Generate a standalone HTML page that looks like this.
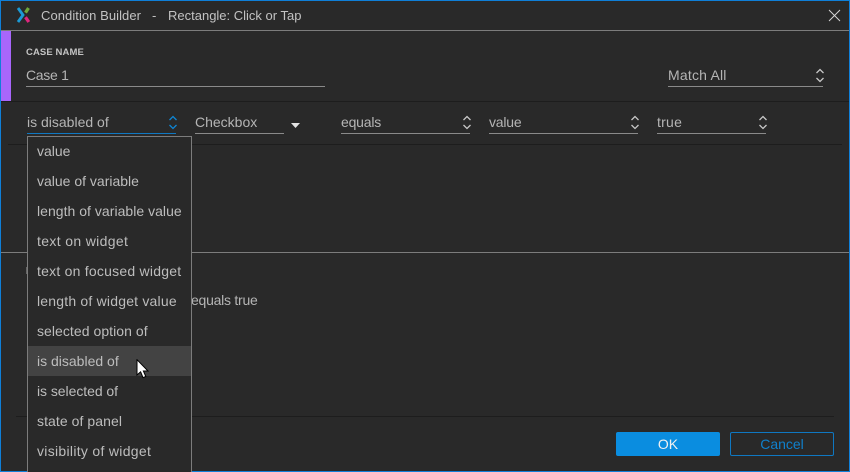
<!DOCTYPE html>
<html>
<head>
<meta charset="utf-8">
<style>
html,body{margin:0;padding:0;background:#292929}
#r{position:relative;width:850px;height:472px;overflow:hidden;background:#292929;font-family:"Liberation Sans",sans-serif;font-size:13px;color:#bdbdbd}
.a{position:absolute}
.t{position:absolute;white-space:nowrap;line-height:18px;height:18px}
.l{position:absolute;height:1px}
.i{position:absolute;left:37px;white-space:nowrap;line-height:18px;font-size:14px;color:#bdbdbd}
svg{position:absolute;display:block}
</style>
</head>
<body>
<div id="r">
<div class="a" style="left:0;top:0;width:850px;height:1px;background:#0f7fd8"></div>
<div class="a" style="left:0;top:471px;width:850px;height:1px;background:#0f7fd8"></div>
<div class="a" style="left:0;top:0;width:1px;height:472px;background:#0f7fd8"></div>
<div class="a" style="left:849px;top:0;width:1px;height:472px;background:#0f7fd8"></div>

<svg style="left:16px;top:7px" width="15" height="16" viewBox="0 0 15 16">
<path d="M2 1 L7 8 L2 15" fill="none" stroke="#1b9ad6" stroke-width="2.8"/>
<path d="M12.5 1 L9.5 5.6" fill="none" stroke="#6fa83c" stroke-width="3.2"/>
<path d="M9.5 10.2 L12.8 15" fill="none" stroke="#e0267f" stroke-width="3.2"/>
</svg>
<div class="t" style="left:41px;top:7px;font-size:13px;letter-spacing:.06px;color:#c2c2c2">Condition Builder</div>
<div class="t" style="left:152px;top:7px;color:#c2c2c2">-</div>
<div class="t" style="left:168px;top:7px;font-size:13px;color:#c2c2c2">Rectangle: Click or Tap</div>
<svg style="left:828px;top:9px" width="13" height="13" viewBox="0 0 13 13"><path d="M1 1 L12 12 M12 1 L1 12" stroke="#d8d8d8" stroke-width="0.9" fill="none"/></svg>

<div class="l" style="left:1px;top:30px;width:848px;background:#7c7c7c"></div>
<div class="a" style="left:1px;top:31px;width:10px;height:70px;background:#a866fb"></div>
<div class="t" style="left:26px;top:44px;font-size:9.5px;font-weight:bold;letter-spacing:.1px;color:#c4c4c4">CASE NAME</div>
<div class="t" style="left:26px;top:66px;font-size:14px;letter-spacing:-.3px;color:#b5b5b5">Case 1</div>
<div class="l" style="left:26px;top:86px;width:299px;background:#8a8a8a"></div>

<div class="t" style="left:668px;top:66px;font-size:14px;letter-spacing:.2px;color:#b5b5b5">Match All</div>
<div class="l" style="left:668px;top:86px;width:155px;background:#8a8a8a"></div>
<svg style="left:815px;top:68px" width="10" height="15" viewBox="0 0 10 15"><path d="M1.5 5 L5 1.5 L8.5 5 M1.5 10 L5 13.5 L8.5 10" fill="none" stroke="#c8c8c8" stroke-width="1.3"/></svg>

<div class="l" style="left:1px;top:101px;width:848px;background:#1d1d1d"></div>

<div class="t" style="left:27px;top:113px;font-size:14px;color:#b5b5b5">is disabled of</div>
<div class="l" style="left:27px;top:133px;width:149px;background:#0f78c2"></div>
<svg style="left:168px;top:115px" width="10" height="15" viewBox="0 0 10 15"><path d="M1.5 5 L5 1.5 L8.5 5 M1.5 10 L5 13.5 L8.5 10" fill="none" stroke="#0f86d4" stroke-width="1.3"/></svg>

<div class="t" style="left:195px;top:113px;font-size:14px;color:#b5b5b5">Checkbox</div>
<div class="l" style="left:195px;top:133px;width:89px;background:#8a8a8a"></div>
<svg style="left:291px;top:123px" width="10" height="6" viewBox="0 0 10 6"><path d="M0 0 H9 L4.5 5 Z" fill="#e4e4e4"/></svg>

<div class="t" style="left:341px;top:113px;font-size:14px;letter-spacing:-.2px;color:#b5b5b5">equals</div>
<div class="l" style="left:341px;top:133px;width:129px;background:#8a8a8a"></div>
<svg style="left:462px;top:115px" width="10" height="15" viewBox="0 0 10 15"><path d="M1.5 5 L5 1.5 L8.5 5 M1.5 10 L5 13.5 L8.5 10" fill="none" stroke="#c8c8c8" stroke-width="1.3"/></svg>

<div class="t" style="left:489px;top:113px;font-size:14px;letter-spacing:-.2px;color:#b5b5b5">value</div>
<div class="l" style="left:489px;top:133px;width:149px;background:#8a8a8a"></div>
<svg style="left:630px;top:115px" width="10" height="15" viewBox="0 0 10 15"><path d="M1.5 5 L5 1.5 L8.5 5 M1.5 10 L5 13.5 L8.5 10" fill="none" stroke="#c8c8c8" stroke-width="1.3"/></svg>

<div class="t" style="left:657px;top:113px;font-size:14px;letter-spacing:.25px;color:#b5b5b5">true</div>
<div class="l" style="left:657px;top:133px;width:109px;background:#8a8a8a"></div>
<svg style="left:758px;top:115px" width="10" height="15" viewBox="0 0 10 15"><path d="M1.5 5 L5 1.5 L8.5 5 M1.5 10 L5 13.5 L8.5 10" fill="none" stroke="#c8c8c8" stroke-width="1.3"/></svg>

<div class="l" style="left:8px;top:144px;width:834px;background:#1d1d1d"></div>
<div class="l" style="left:1px;top:252px;width:848px;background:#7c7c7c"></div>
<div class="a" style="left:26px;top:267px;width:1px;height:7px;background:#666"></div>
<div class="t" style="left:191px;top:291px;font-size:14px;letter-spacing:-.25px;color:#b5b5b5">equals true</div>
<div class="l" style="left:16px;top:416px;width:818px;background:#1d1d1d"></div>

<div class="a" style="left:616px;top:432px;width:104px;height:24px;background:#0a8de0;border-radius:2px;color:#f0f0f0;font-size:14px;line-height:24px;text-align:center">OK</div>
<div class="a" style="left:730px;top:432px;width:102px;height:22px;border:1px solid #0f78c2;border-radius:2px;color:#0f80cc;font-size:14px;line-height:22px;text-align:center">Cancel</div>

<div class="a" style="left:27px;top:136px;width:163px;height:336px;border:1px solid #7c7c7c;border-bottom:0;background:#292929"></div>
<div class="a" style="left:28px;top:346px;width:163px;height:30px;background:#434343"></div>
<div class="i" style="top:142px">value</div>
<div class="i" style="top:172px">value of variable</div>
<div class="i" style="top:202px;letter-spacing:.03px">length of variable value</div>
<div class="i" style="top:232px;letter-spacing:.35px">text on widget</div>
<div class="i" style="top:262px;letter-spacing:.23px">text on focused widget</div>
<div class="i" style="top:292px;letter-spacing:.2px">length of widget value</div>
<div class="i" style="top:322px;letter-spacing:.05px">selected option of</div>
<div class="i" style="top:352px">is disabled of</div>
<div class="i" style="top:382px;letter-spacing:-.05px">is selected of</div>
<div class="i" style="top:412px;letter-spacing:.07px">state of panel</div>
<div class="i" style="top:442px;letter-spacing:.3px">visibility of widget</div>

<svg style="left:136px;top:359px" width="14" height="20" viewBox="0 0 14 20"><path d="M1 0.7 V16 L4.6 12.8 L7 18.6 L9.8 17.5 L7.4 12 H12 Z" fill="#fff" stroke="#000" stroke-width="1"/></svg>
</div>
</body>
</html>
